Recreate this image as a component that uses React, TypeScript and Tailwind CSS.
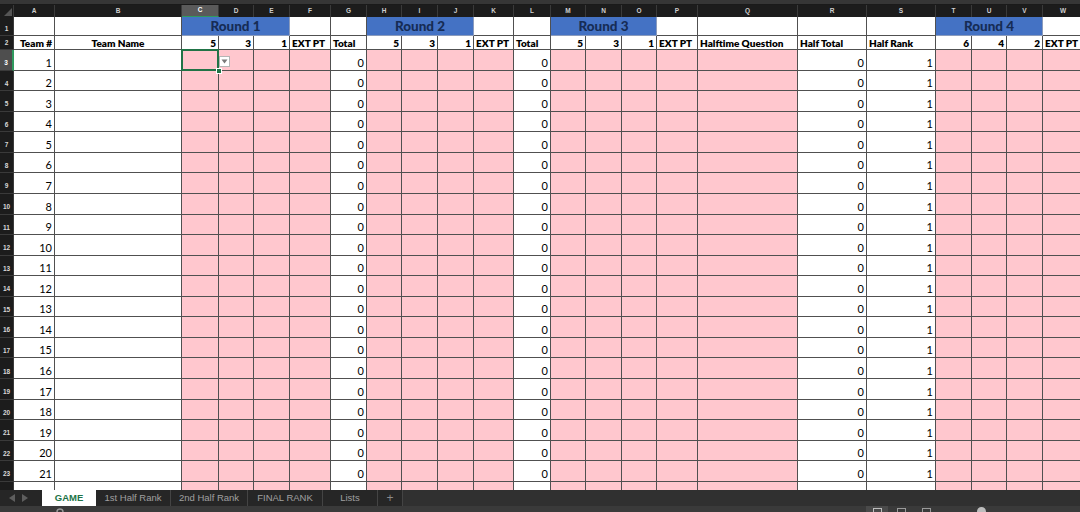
import React from "react";

const GRID =
  "grid grid-cols-[14px_41px_127px_37px_35px_36px_41px_36px_35px_36px_36px_40px_37px_35px_36px_35px_41px_100px_69px_69px_36px_35px_36px_41px]";

const LETTERS = ["A","B","C","D","E","F","G","H","I","J","K","L","M","N","O","P","Q","R","S","T","U","V","W"];

type Kind = "num" | "blank" | "pink" | "zero" | "one";
const KINDS: Kind[] = [
  "num", "blank",
  "pink", "pink", "pink", "pink",
  "zero",
  "pink", "pink", "pink", "pink",
  "zero",
  "pink", "pink", "pink", "pink", "pink",
  "zero", "one",
  "pink", "pink", "pink", "pink",
];

const cellFont = { fontFamily: "Lato, 'Open Sans', 'Liberation Sans', sans-serif" };

function RowHeader({ n, selected, h }: { n: number | string; selected?: boolean; h: string }) {
  return (
    <div
      className={`${h} flex items-end justify-center pb-[3px] text-[6.5px] font-bold leading-none border-b border-[#3a3a3a] ${
        selected ? "bg-[#4e4e4e] text-white border-r-2 border-r-[#2f9a5e]" : "bg-[#1c1c1c] text-[#d8d8d8] border-r border-r-[#3a3a3a]"
      }`}
      style={{ fontFamily: "'Liberation Sans', Arial, sans-serif" }}
    >
      {n}
    </div>
  );
}

function DataRow({ r }: { r: number }) {
  const team = r - 2;
  const h = "h-[20.57px]";
  return (
    <div className={GRID} style={cellFont}>
      <RowHeader n={r} selected={r === 3} h={h} />
      {KINDS.map((k, i) => {
        const base = `${h} border-r border-b border-[#505050] flex items-end justify-end pr-[2px] pb-[2px] text-[11px] leading-none text-black`;
        if (k === "pink") {
          if (r === 3 && i === 2) {
            return (
              <div key={i} className={`${base} bg-[#ffc7ce] relative`}>
                <div className="absolute left-[-1px] top-[-1px] right-[-1px] bottom-[-1px] border-2 border-[#217346] z-10" />
                <div className="absolute right-[-4px] bottom-[-4px] w-[6px] h-[6px] bg-[#217346] border border-white z-20" />
                <div className="absolute left-[calc(100%+1px)] top-[6px] w-[11px] h-[11px] bg-white border border-[#b5b5b5] z-20 flex items-center justify-center">
                  <svg width="7" height="5" viewBox="0 0 7 5">
                    <path d="M0.5 0.5 L6.5 0.5 L3.5 4.5 Z" fill="#7a7a7a" />
                  </svg>
                </div>
              </div>
            );
          }
          return <div key={i} className={`${base} bg-[#ffc7ce]`} />;
        }
        if (k === "num") return <div key={i} className={`${base} bg-white`}>{team}</div>;
        if (k === "zero") return <div key={i} className={`${base} bg-white`}>0</div>;
        if (k === "one") return <div key={i} className={`${base} bg-white`}>1</div>;
        return <div key={i} className={`${base} bg-white`} />;
      })}
    </div>
  );
}

function RoundCell({ label }: { label: string }) {
  return (
    <div className="col-span-3 h-[19px] bg-[#4472c4] border-r border-b border-[#8a9bbd] flex items-center justify-center text-[13.5px] font-black text-[#162c55] leading-none pt-[2px]">
      {label}
    </div>
  );
}

function W1() {
  return <div className="h-[19px] bg-white border-r border-b border-[#505050]" />;
}

function H2({ children, align = "right" }: { children?: React.ReactNode; align?: "left" | "right" | "center" }) {
  const j = align === "left" ? "justify-start pl-[2px]" : align === "center" ? "justify-center" : "justify-end pr-[2px]";
  return (
    <div className={`h-[14px] bg-white border-r border-b border-[#505050] flex items-end ${j} pb-[1px] text-[10px] font-extrabold leading-none text-black whitespace-nowrap overflow-hidden`}>
      {children}
    </div>
  );
}

export default function App() {
  const rows = Array.from({ length: 21 }, (_, i) => i + 3);
  return (
    <div className="w-[1080px] h-[512px] overflow-hidden bg-[#2b2b2b] flex flex-col">
      {/* top band */}
      <div className="h-[5px] bg-[#363636] border-b border-[#1a1a1a] shrink-0" />

      {/* column letters */}
      <div className={`${GRID} shrink-0`} style={{ fontFamily: "'Liberation Sans', Arial, sans-serif" }}>
        <div className="h-[12px] bg-[#1c1c1c] border-r border-[#3a3a3a] relative">
          <svg className="absolute right-[1px] bottom-[1px]" width="8" height="8" viewBox="0 0 8 8">
            <path d="M8 0 L8 8 L0 8 Z" fill="#555" />
          </svg>
        </div>
        {LETTERS.map((l) => (
          <div
            key={l}
            className={`h-[12px] flex items-center justify-center text-[6.5px] font-bold leading-none border-r border-[#3a3a3a] ${
              l === "C" ? "bg-[#5a5a5a] text-white border-b border-b-[#2f9a5e]" : "bg-[#1c1c1c] text-[#cfcfcf]"
            }`}
          >
            {l}
          </div>
        ))}
      </div>

      {/* row 1 */}
      <div className={`${GRID} shrink-0`} style={cellFont}>
        <RowHeader n={1} h="h-[19px]" />
        <W1 />
        <W1 />
        <RoundCell label="Round 1" />
        <W1 />
        <W1 />
        <RoundCell label="Round 2" />
        <W1 />
        <W1 />
        <RoundCell label="Round 3" />
        <W1 />
        <W1 />
        <W1 />
        <W1 />
        <RoundCell label="Round 4" />
        <W1 />
      </div>

      {/* row 2 */}
      <div className={`${GRID} shrink-0`} style={cellFont}>
        <RowHeader n={2} h="h-[14px]" />
        <H2>Team #</H2>
        <H2 align="center">Team Name</H2>
        <H2>5</H2>
        <H2>3</H2>
        <H2>1</H2>
        <H2 align="left">EXT PT</H2>
        <H2 align="left">Total</H2>
        <H2>5</H2>
        <H2>3</H2>
        <H2>1</H2>
        <H2 align="left">EXT PT</H2>
        <H2 align="left">Total</H2>
        <H2>5</H2>
        <H2>3</H2>
        <H2>1</H2>
        <H2 align="left">EXT PT</H2>
        <H2 align="left">Halftime Question</H2>
        <H2 align="left">Half Total</H2>
        <H2 align="left">Half Rank</H2>
        <H2>6</H2>
        <H2>4</H2>
        <H2>2</H2>
        <H2 align="left">EXT PT</H2>
      </div>

      {rows.map((r) => (
        <DataRow key={r} r={r} />
      ))}

      {/* partial row 24 */}
      <div className={`${GRID} shrink-0 h-[8px] overflow-hidden`}>
        <div className="h-[8px] bg-[#1c1c1c] border-r border-[#3a3a3a]" />
        {KINDS.map((k, i) => (
          <div key={i} className={`h-[8px] border-r border-[#505050] ${k === "pink" ? "bg-[#ffc7ce]" : "bg-white"}`} />
        ))}
      </div>

      {/* sheet tabs */}
      <div
        className="h-[16px] shrink-0 flex bg-[#303030] text-[9.5px] leading-none"
        style={{ fontFamily: "'Liberation Sans', Arial, sans-serif" }}
      >
        <div className="w-[42px] h-full bg-[#262626] flex items-center pl-[9px] gap-[7px]">
          <svg width="6" height="8" viewBox="0 0 6 8"><path d="M6 0 L6 8 L0 4 Z" fill="#5e5e5e" /></svg>
          <svg width="6" height="8" viewBox="0 0 6 8"><path d="M0 0 L0 8 L6 4 Z" fill="#5e5e5e" /></svg>
        </div>
        <div className="w-[54px] h-full bg-white flex items-center justify-center text-[#217346] font-bold">GAME</div>
        <div className="w-[75px] h-full bg-[#262626] flex items-center justify-center text-[#a0a0a0] border-r border-[#444]">1st Half Rank</div>
        <div className="w-[77px] h-full bg-[#262626] flex items-center justify-center text-[#a0a0a0] border-r border-[#444]">2nd Half Rank</div>
        <div className="w-[75px] h-full bg-[#262626] flex items-center justify-center text-[#a0a0a0] border-r border-[#444]">FINAL RANK</div>
        <div className="w-[55px] h-full bg-[#262626] flex items-center justify-center text-[#a0a0a0] border-r border-[#444]">Lists</div>
        <div className="w-[25px] h-full bg-[#262626] flex items-center justify-center text-[#8a8a8a] text-[12px] border-r border-[#444]">+</div>
        <div className="flex-1" />
      </div>

      {/* status bar (cut off) */}
      <div className="h-[7px] shrink-0 bg-[#3a3a3a] relative overflow-hidden">
        <svg className="absolute left-[55px] top-[1px]" width="10" height="8" viewBox="0 0 10 8">
          <circle cx="5" cy="5" r="3" fill="none" stroke="#9a9a9a" strokeWidth="1.4" />
        </svg>
        <div className="absolute left-[866px] top-0 w-[22px] h-[7px] bg-[#4a4a4a]" />
        <div className="absolute left-[873px] top-[2px] w-[9px] h-[6px] border border-[#bdbdbd]" />
        <div className="absolute left-[897px] top-[2px] w-[9px] h-[6px] border border-[#9a9a9a]" />
        <div className="absolute left-[922px] top-[2px] w-[9px] h-[6px] border border-[#9a9a9a]" />
        <div className="absolute left-[977px] top-[1px] w-[9px] h-[9px] rounded-full bg-[#bdbdbd]" />
      </div>
    </div>
  );
}
